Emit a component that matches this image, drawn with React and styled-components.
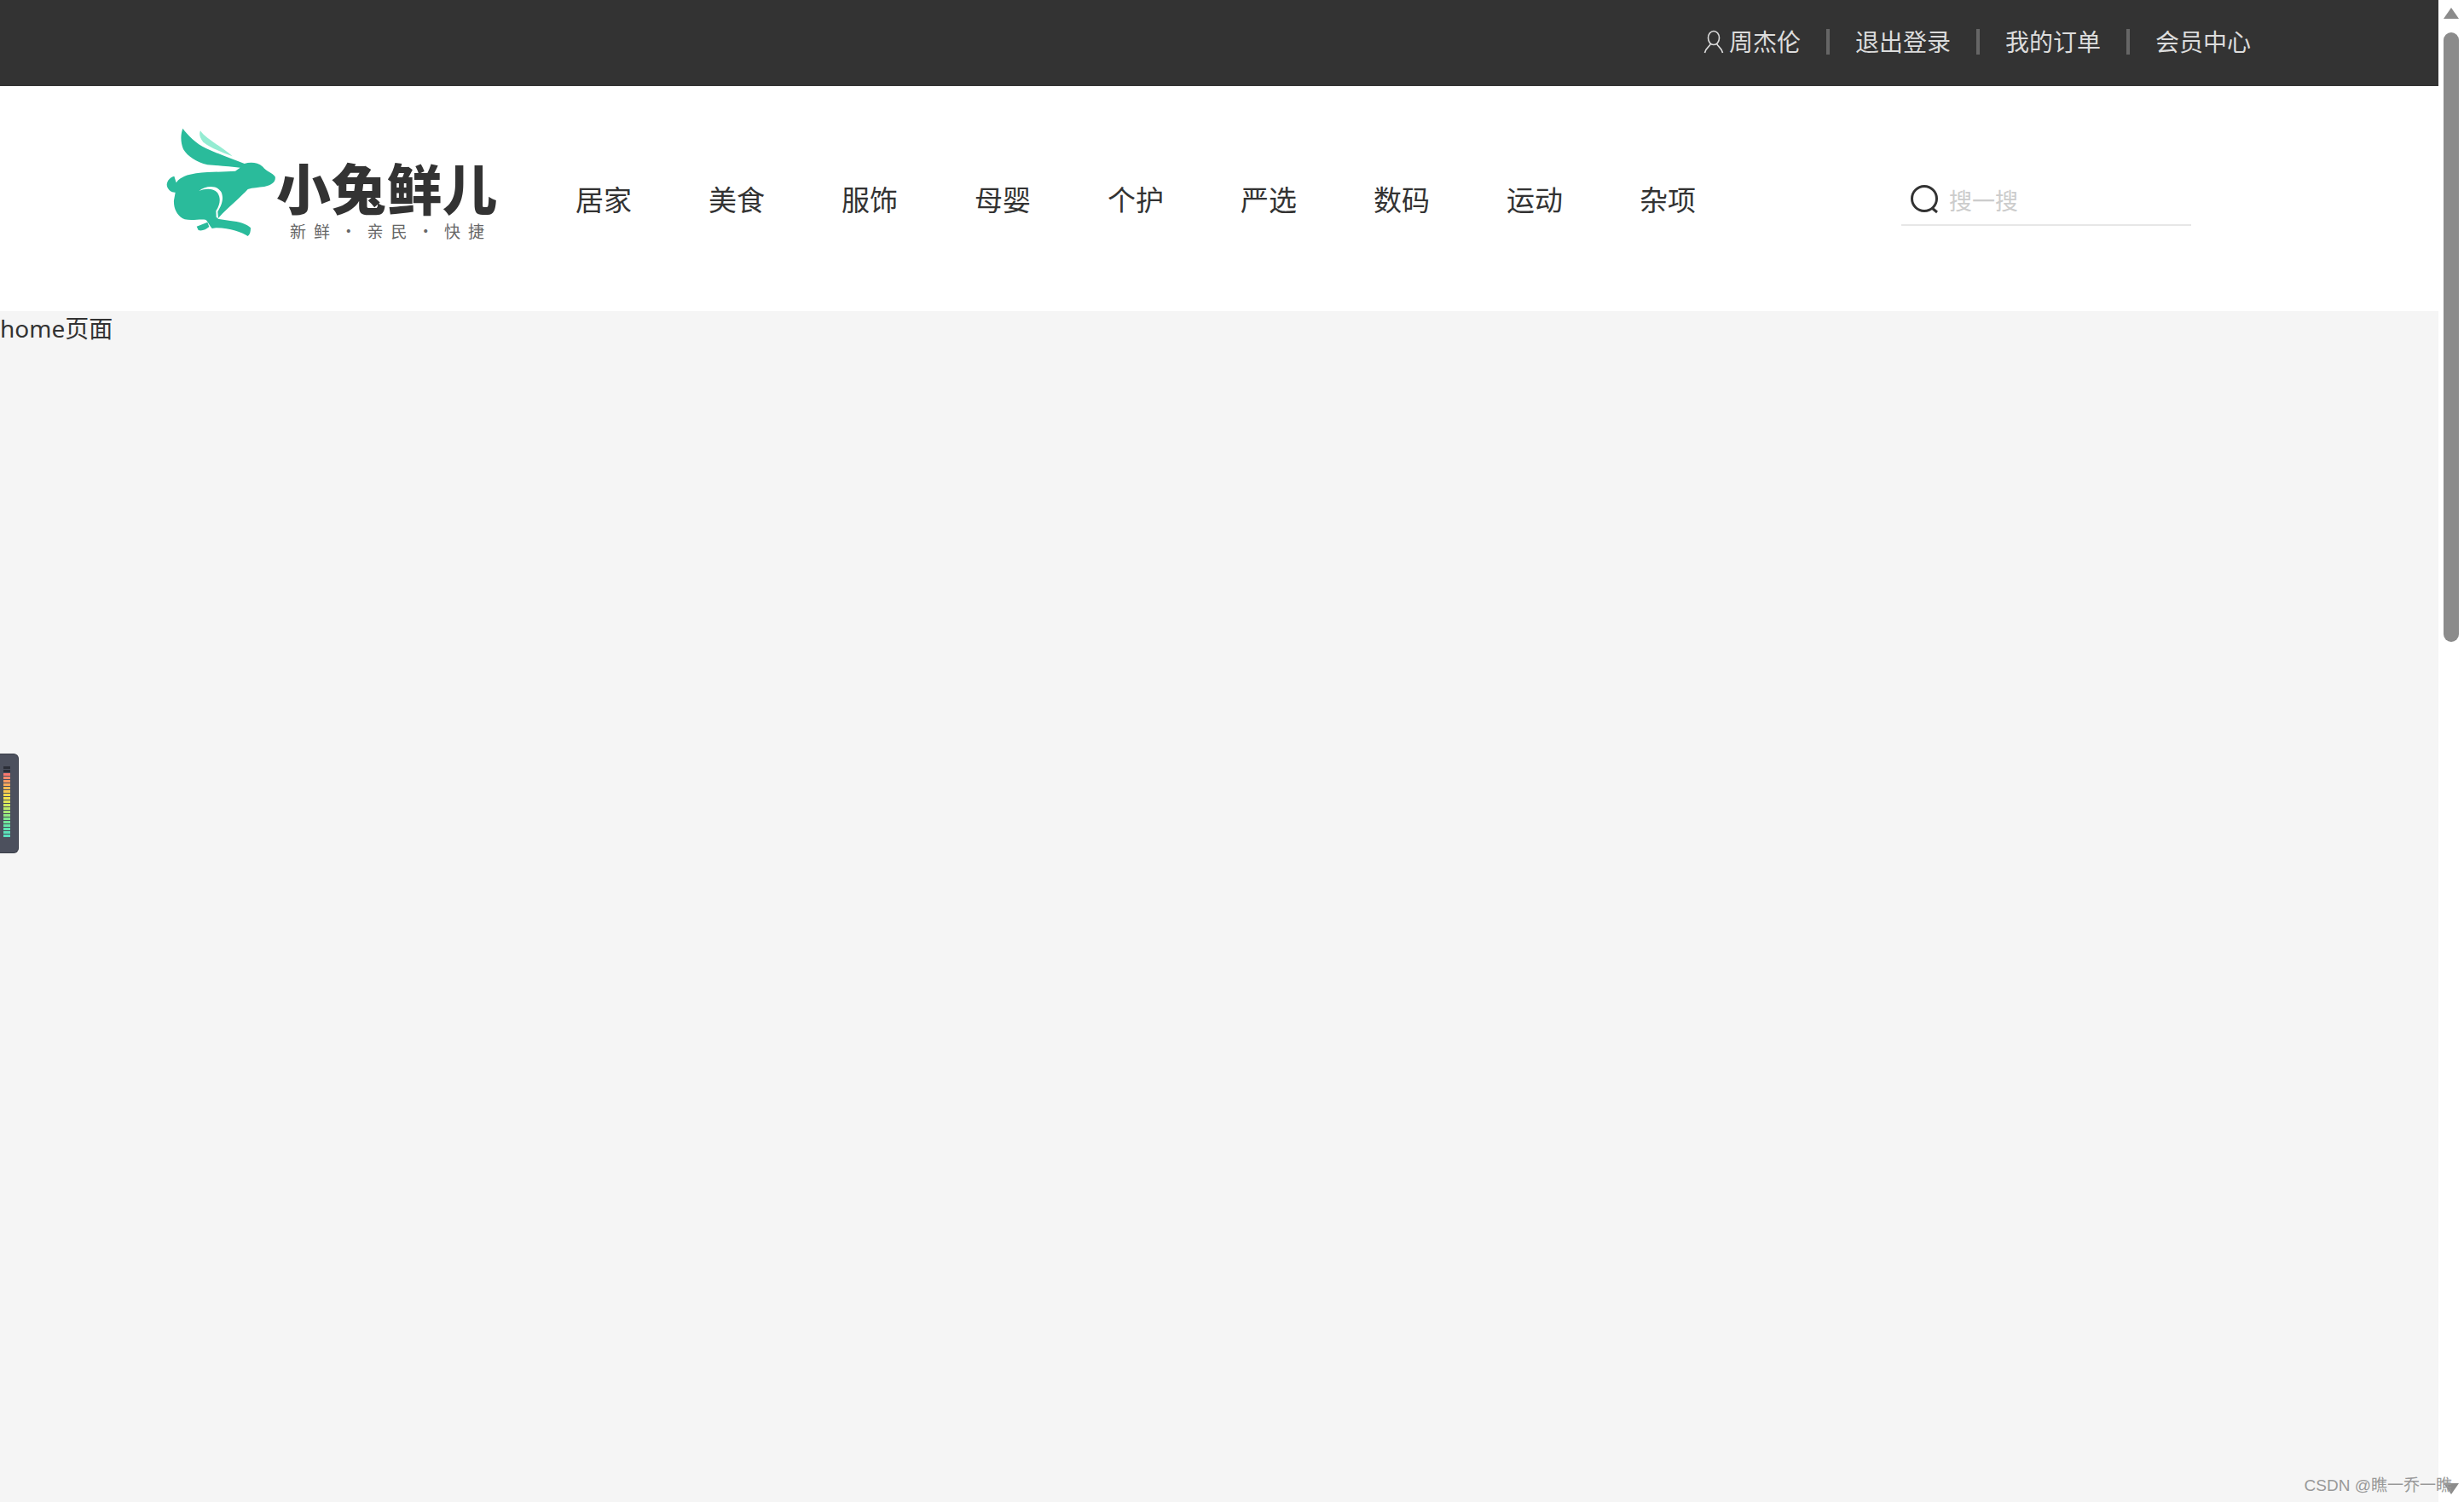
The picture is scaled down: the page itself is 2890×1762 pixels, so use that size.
import React from 'react';
import styled, { createGlobalStyle } from 'styled-components';

const GlobalStyle = createGlobalStyle`
  html, body {
    margin: 0;
    padding: 0;
    height: 100%;
    overflow: hidden;
    background: #fff;
  }
  body {
    font-family: "Noto Sans", "Noto Sans CJK SC", sans-serif;
    color: #333;
  }
  * { box-sizing: border-box; }
`;

const Shell = styled.div`
  position: relative;
  display: flex;
  width: 2890px;
  height: 1762px;
  overflow: hidden;
`;

const Page = styled.div`
  display: flex;
  flex-direction: column;
  flex: 1;
  min-width: 0;
`;

/* top dark bar */
const TopBar = styled.nav`
  height: 101px;
  flex: none;
  background: #333;
`;

const TopList = styled.ul`
  display: flex;
  justify-content: flex-end;
  align-items: center;
  width: 2480px;
  height: 100%;
  margin: 0 auto;
  padding: 0 30px 4px 0;
  list-style: none;
`;

const TopItem = styled.li`
  display: flex;
  align-items: center;
  height: 30px;
  padding: 0 30px;
  border-left: ${p => (p.$first ? 'none' : '4px solid #666')};
  font-size: 28px;
  line-height: 30px;
  color: #dcdcdc;
  &:last-child { padding-right: 0; }
`;

const UserIcon = styled.svg`
  width: 26px;
  height: 30px;
  margin-right: 5px;
  fill: none;
  stroke: #dcdcdc;
  stroke-width: 1.6;
`;

/* white header */
const Header = styled.header`
  height: 264px;
  flex: none;
  background: #fff;
`;

const HeaderInner = styled.div`
  display: flex;
  align-items: center;
  width: 2480px;
  height: 100%;
  margin: 0 auto;
`;

const Logo = styled.a`
  display: flex;
  width: 485px;
  flex: none;
  padding: 0 0 33px 5px;
`;

const Rabbit = styled.svg`
  display: block;
  width: 130px;
  height: 130px;
  flex: none;
`;

const LogoText = styled.div`
  display: flex;
  flex-direction: column;
  align-items: flex-start;
  margin-left: -1px;
  padding-top: 34px;
`;

const LogoWord = styled.div`
  width: 260px;
  font-family: "Noto Sans CJK SC", sans-serif;
  font-size: 64px;
  line-height: 68px;
  font-weight: 900;
  letter-spacing: 1px;
  color: #333;
  white-space: nowrap;
`;

const LogoTag = styled.div`
  margin: 7px 0 0 16px;
  font-family: "Noto Sans CJK SC", sans-serif;
  font-size: 19px;
  line-height: 24px;
  letter-spacing: 9px;
  word-spacing: -10px;
  color: #666;
  white-space: pre;
`;

const NavList = styled.ul`
  display: flex;
  gap: 90px;
  flex: none;
  margin: 0;
  padding: 4px 0 0;
  list-style: none;
`;

const NavItem = styled.li`
  font-size: 33px;
  line-height: 44px;
  color: #333;
  white-space: nowrap;
`;

const Search = styled.div`
  display: flex;
  align-items: center;
  width: 340px;
  height: 60px;
  margin: 4px 100px 0 auto;
  padding: 0 0 0 10px;
  border-bottom: 2px solid #e7e7e7;
`;

const SearchIcon = styled.svg`
  width: 36px;
  height: 38px;
  flex: none;
  margin-top: 2px;
  fill: none;
  stroke: #333;
`;

const SearchInput = styled.input`
  flex: 1;
  min-width: 0;
  margin: 2px 0 0 10px;
  padding: 0;
  border: 0;
  outline: 0;
  background: transparent;
  font-family: "Noto Sans CJK SC", sans-serif;
  font-size: 27px;
  line-height: 36px;
  color: #333;
  &::placeholder { color: #ccc; opacity: 1; }
`;

const Main = styled.main`
  flex: 1;
  background: #f5f5f5;
  font-size: 28px;
  line-height: 40px;
  color: #333;
`;

/* fake browser scrollbar */
const ScrollRail = styled.div`
  display: flex;
  flex-direction: column;
  align-items: center;
  width: 30px;
  height: 100%;
  flex: none;
  padding: 9px 0 9px;
  background: #fff;
`;

const ArrowUp = styled.div`
  flex: none;
  width: 0;
  height: 0;
  border-left: 9px solid transparent;
  border-right: 9px solid transparent;
  border-bottom: 13px solid #8b8b8b;
`;

const ArrowDown = styled.div`
  flex: none;
  width: 0;
  height: 0;
  margin-top: auto;
  border-left: 9px solid transparent;
  border-right: 9px solid transparent;
  border-top: 13px solid #8b8b8b;
`;

const Thumb = styled.div`
  flex: none;
  width: 18px;
  height: 715px;
  margin-top: 16px;
  border-radius: 9px;
  background: #8b8b8b;
`;

/* overlays */
const Watermark = styled.div`
  position: absolute;
  right: 14px;
  bottom: 8px;
  font-family: "Liberation Sans", "Noto Sans CJK SC", sans-serif;
  font-size: 19px;
  line-height: 22px;
  color: #999;
  white-space: nowrap;
`;

const MeterTab = styled.div`
  position: absolute;
  left: 0;
  top: 884px;
  display: flex;
  flex-direction: column;
  gap: 1px;
  width: 22px;
  height: 117px;
  padding: 14px 0 0 4px;
  border-radius: 0 6px 6px 0;
  border: 1px solid #3a3e49;
  border-left: 0;
  background: #4c505d;
`;

const MeterBar = styled.span`
  display: block;
  width: 8px;
  height: 3px;
  background: ${p => p.$color};
`;

const navItems = ['居家', '美食', '服饰', '母婴', '个护', '严选', '数码', '运动', '杂项'];

const meterColors = [
  '#2b2e37', '#2b2e37',
  '#f9786f', '#fb8a6b', '#fb9a62', '#fbaa5c', '#fbba54', '#fbc94f', '#f9d84d',
  '#f1e24f', '#e0e657', '#cfe960', '#bcea6a', '#a6ea76', '#92ea82', '#7fe98e',
  '#70e89a', '#66e6a6', '#60e4b0', '#5ce2b8', '#58e0bf',
];

const App = () => {
  return (
    <Shell>
      <GlobalStyle />
      <Page>
        <TopBar>
          <TopList>
            <TopItem $first>
              <UserIcon viewBox="0 0 26 30">
                <ellipse cx="13" cy="10.5" rx="6.5" ry="8" />
                <path d="M9.5 17 C8.5 21 3.5 22 2.5 28 M16.5 17 C17.5 21 22.5 22 23.5 28" />
              </UserIcon>
              周杰伦
            </TopItem>
            <TopItem>退出登录</TopItem>
            <TopItem>我的订单</TopItem>
            <TopItem>会员中心</TopItem>
          </TopList>
        </TopBar>
        <Header>
          <HeaderInner>
            <Logo>
              <Rabbit viewBox="75 60 390 390">
                <path
                  fill="#94ecd2"
                  d="M195 70 C215 100 270 125 308 160 C270 145 230 130 205 110 C192 95 190 80 195 70 Z"
                />
                <path
                  fill="#2abb9b"
                  d="M133 62 C150 85 180 115 215 132 C265 155 310 170 350 186 C370 180 395 180 415 197 C425 212 450 218 458 232 C462 250 445 262 420 267 C400 270 380 270 362 276 C340 300 300 335 272 362 L256 380 L300 387 C330 390 360 398 372 412 C372 425 370 435 362 441 C340 428 300 412 250 412 L236 414 C228 405 222 392 215 384 C195 380 165 388 140 382 C115 372 100 345 102 315 L107 287 C95 288 78 278 77 260 C78 245 90 232 103 230 L110 253 C125 232 150 225 180 220 C230 214 280 215 318 212 L335 200 C300 197 260 192 220 190 C180 180 150 160 135 135 C125 110 125 85 133 62 Z"
                />
                <path
                  fill="#2abb9b"
                  d="M182 407 L220 392 L226 408 C215 418 200 424 188 420 Z"
                />
                <path
                  fill="#fff"
                  d="M190 282 C215 262 255 262 268 285 C280 310 268 335 256 355 L258 378 L251 375 L250 352 C262 335 270 310 255 288 C240 272 215 272 190 282 Z"
                />
              </Rabbit>
              <LogoText>
                <LogoWord>小兔鲜儿</LogoWord>
                <LogoTag>{'新鲜 · 亲民 · 快捷'}</LogoTag>
              </LogoText>
            </Logo>
            <NavList>
              {navItems.map(item => (
                <NavItem key={item}>{item}</NavItem>
              ))}
            </NavList>
            <Search>
              <SearchIcon viewBox="0 0 36 38">
                <circle cx="17" cy="17" r="14.5" strokeWidth="3" />
                <path d="M26 28 L32 33" strokeWidth="3" />
              </SearchIcon>
              <SearchInput placeholder="搜一搜" />
            </Search>
          </HeaderInner>
        </Header>
        <Main>home页面</Main>
      </Page>
      <ScrollRail>
        <ArrowUp />
        <Thumb />
        <ArrowDown />
      </ScrollRail>
      <MeterTab>
        {meterColors.map((color, i) => (
          <MeterBar key={i} $color={color} />
        ))}
      </MeterTab>
      <Watermark>CSDN @瞧一乔一瞧</Watermark>
    </Shell>
  );
};

export default App;
